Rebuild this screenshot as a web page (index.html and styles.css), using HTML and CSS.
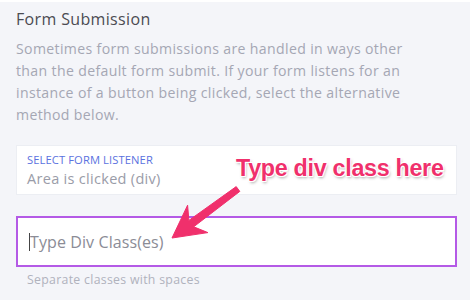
FILE: index.html
```html
<!DOCTYPE html>
<html>
<head>
<meta charset="utf-8">
<link rel="stylesheet" href="styles.css">
</head>
<body>
<div class="panel">
  <h2 class="title">Form Submission</h2>
  <p class="desc">Sometimes form submissions are handled in ways other<br>than the default form submit. If your form listens for an<br>instance of a button being clicked, select the alternative<br>method below.</p>
  <div class="select">
    <div class="select-label">SELECT FORM LISTENER</div>
    <div class="select-value">Area is clicked (div)</div>
  </div>
  <div class="input"><span class="caret"></span><span class="placeholder">Type Div Class(es)</span></div>
  <div class="help">Separate classes with spaces</div>
  <div class="callout">Type div class here</div>
  <svg class="arrow" width="90" height="70" viewBox="0 0 90 70">
    <path d="M12 56 L27.6 23.2 L28.9 38.4 L76.2 4.6 L79.8 9.4 L33.7 44.8 L47.9 50.6 Z" fill="#f0306c" stroke="#f0306c" stroke-width="1" stroke-linejoin="round"/>
  </svg>
</div>
</body>
</html>
```
FILE: styles.css
```css
html, body { margin: 0; padding: 0; background: #ffffff; }
body { width: 474px; height: 304px; overflow: hidden; font-family: "Open Sans", "Noto Sans", sans-serif; }
.panel {
  position: relative;
  margin: 2px 0 0 0;
  width: 470px;
  height: 298px;
  background: #f4f5f9;
  box-sizing: border-box;
  padding: 7px 13px 0 16px;
  display: flex;
  flex-direction: column;
}
.title { margin: 0; font-size: 16px; font-weight: 400; color: #4b4b52; line-height: 20px; letter-spacing: 0.35px; }
.desc { margin: 9px 0 0 0; font-size: 14.1px; line-height: 22px; color: #a5a7b4; letter-spacing: 0.35px; white-space: nowrap; }
.select {
  margin-top: 19px;
  background: #ffffff;
  border: 1px solid #eceef3;
  height: 50px;
  box-sizing: border-box;
  padding: 7px 11px 0 10px;
}
.select-label { font-size: 11.2px; color: #5b72e0; line-height: 14px; letter-spacing: 0.1px; }
.select-value { font-size: 14.5px; color: #9a9ca8; line-height: 20px; margin-top: 2px; letter-spacing: 0.3px; }
.input {
  margin-top: 21px;
  height: 51px;
  box-sizing: border-box;
  background: #ffffff;
  border: 2px solid #b45ae6;
  display: flex;
  align-items: center;
  padding-left: 11px;
}
.caret { width: 1px; height: 18px; background: #444; }
.placeholder { font-size: 16px; color: #8b8c96; letter-spacing: 0.1px; }
.help { margin-top: 4px; font-size: 12.3px; color: #b0b2bd; line-height: 18px; padding-left: 11px; letter-spacing: 0.3px; }
.callout {
  position: absolute;
  left: 236px;
  top: 153px;
  font-family: "Liberation Sans", Arial, sans-serif;
  font-weight: 700;
  font-size: 23.3px;
  color: #f0306c;
  letter-spacing: -0.3px;
  text-shadow: 1px 1px 0 #fff, -1px -1px 0 #fff, 1px -1px 0 #fff, -1px 1px 0 #fff, 1px 2px 3px rgba(0,0,0,0.35);
}
.arrow { position: absolute; left: 160px; top: 180px; }
```
